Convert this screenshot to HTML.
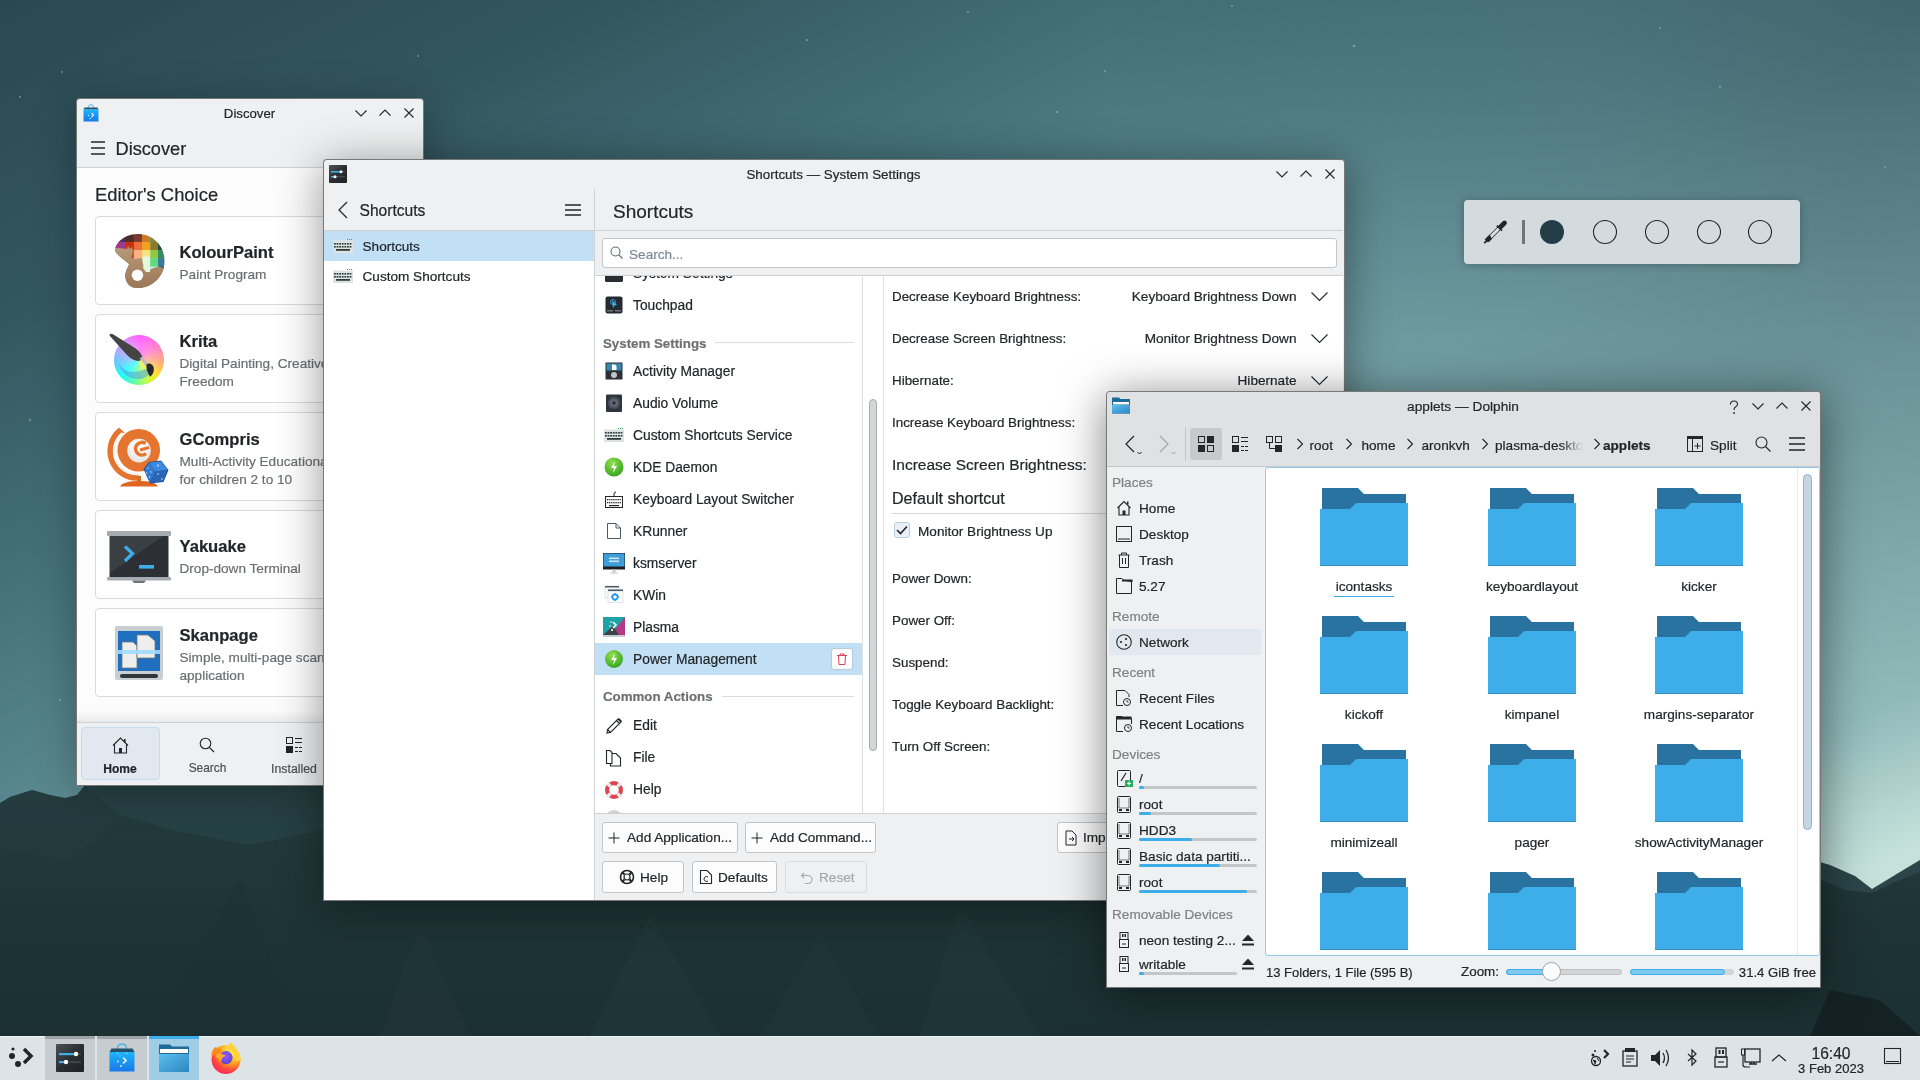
<!DOCTYPE html><html><head><meta charset="utf-8"><style>
html,body{margin:0;padding:0;}
body{width:1920px;height:1080px;overflow:hidden;position:relative;font-family:"Liberation Sans", sans-serif;}
.t{position:absolute;white-space:nowrap;-webkit-text-stroke:0.2px currentColor;}
svg{overflow:visible}
</style></head><body><div style="position:absolute;left:0;top:0;width:1920px;height:1080px;overflow:hidden;will-change:transform">
<div style="position:absolute;left:0;top:0;width:1920px;height:1080px;background:linear-gradient(153.3deg, #2a4852 0%, #33575f 15.6%, #47747d 30.5%, #5a8890 40%, #74a3a8 52.5%, #97c2c1 81%, #c4e0d9 88.3%, #d2e9e1 100%);"></div>
<div style="position:absolute;left:0;top:0;width:1920px;height:1080px;background:radial-gradient(520px 340px at 1400px 430px, rgba(200,240,240,0.09) 0%, rgba(200,240,240,0.05) 50%, rgba(200,240,240,0) 100%);"></div>
<div style="position:absolute;left:0;top:0;width:1920px;height:1080px;background:radial-gradient(circle 820px at 1920px 0px, rgba(5,25,35,0.40) 0%, rgba(5,25,35,0.2) 42%, rgba(5,25,35,0) 100%);"></div>
<svg style="position:absolute;left:0;top:0" width="1920" height="1080"><circle cx="807" cy="40" r="0.90" fill="#c8f0b0" opacity="0.55"/><circle cx="1057" cy="112" r="0.90" fill="#f0d0e0" opacity="0.55"/><circle cx="1354" cy="46" r="0.90" fill="#d0f0f0" opacity="0.55"/><circle cx="1720" cy="87" r="0.90" fill="#80f0f0" opacity="0.55"/><circle cx="418" cy="56" r="0.90" fill="#a0c8c8" opacity="0.55"/><circle cx="20" cy="97" r="0.90" fill="#a0d0d0" opacity="0.55"/><circle cx="1105" cy="71" r="0.90" fill="#a0d0d0" opacity="0.55"/><circle cx="968" cy="12" r="0.90" fill="#a0d0d0" opacity="0.55"/><circle cx="1232" cy="6" r="0.90" fill="#a0d0d0" opacity="0.55"/><circle cx="62" cy="72" r="0.90" fill="#a0c8c8" opacity="0.55"/><circle cx="1885" cy="167" r="0.90" fill="#a0d0d0" opacity="0.55"/><circle cx="1660" cy="28" r="0.90" fill="#a0d0d0" opacity="0.55"/><circle cx="30" cy="420" r="0.90" fill="#c0e0c0" opacity="0.55"/><circle cx="60" cy="700" r="0.90" fill="#c0e0a0" opacity="0.55"/></svg>
<svg style="position:absolute;left:0;top:0" width="1920" height="1080" viewBox="0 0 1920 1080">
<defs><linearGradient id="mg" x1="0" y1="0" x2="0" y2="1"><stop offset="0" stop-color="#243c3e"/><stop offset="0.5" stop-color="#1e3336"/><stop offset="1" stop-color="#1b2f32"/></linearGradient></defs>
<polygon fill="#2b4548" points="1820,862 1830,865 1855,876 1872,889 1900,872 1920,860 1920,900 1820,900"/>
<polygon fill="url(#mg)" points="0,803 10,797 32,790 50,795 65,798 77,795 85,785 323,780 1100,800 1800,870 1822,880 1845,890 1872,893 1895,882 1920,872 1920,1080 0,1080"/>
<polygon fill="#2d4b4e" opacity="0.45" points="85,786 323,781 323,830 250,845 180,832 120,815"/>
<polygon fill="#263f42" opacity="0.4" points="0,803 10,797 32,790 50,795 65,798 77,795 85,786 120,815 70,860 0,850"/>
<polygon fill="#24393c" opacity="0.35" points="380,1036 420,925 470,1036"/>
<polygon fill="#243b3e" opacity="0.35" points="590,1036 650,915 720,1036"/>
<polygon fill="#22383b" opacity="0.35" points="760,1036 820,935 880,1036"/>
<polygon fill="#253c3f" opacity="0.35" points="920,1036 960,905 1040,1036"/>
<polygon fill="#1e3235" opacity="0.35" points="150,1036 240,880 300,1036"/>
<polygon fill="#11191c" opacity="0.6" points="1830,990 1880,1000 1920,1036 1810,1036"/>
</svg>
<div style="position:absolute;left:76px;top:98px;width:346px;height:686px;border:1px solid rgba(0,0,0,0.5);border-radius:4px 4px 0 0;background:#eff0f1;box-shadow:0 6px 40px rgba(0,0,0,0.3)"></div>
<svg style="position:absolute;left:83px;top:104px;" width="16" height="18" viewBox="0 0 16 18"><defs><linearGradient id="bag" x1="0" y1="0" x2="0" y2="1"><stop offset="0" stop-color="#1cb4f7"/><stop offset="1" stop-color="#1a78ea"/></linearGradient></defs><path d="M5.3,6 V3.5 Q5.3,0.7 8,0.7 Q10.7,0.7 10.7,3.5 V6" fill="none" stroke="#3daee9" stroke-width="0.9"/><path d="M1.5,3.5 H14.5 L15.5,5.5 H0.5 Z" fill="#24506a"/><rect x="0.5" y="5.5" width="15" height="12" fill="url(#bag)"/><path d="M8.5,9 L10.5,11 L8.5,13" fill="none" stroke="#e8f6ff" stroke-width="1.1"/><circle cx="5.5" cy="11.5" r="0.7" fill="#cdefff"/><circle cx="7.2" cy="14.5" r="0.7" fill="#cdefff"/></svg>
<div class="t" style="left:249.5px;transform:translateX(-50%);top:107.43px;font-size:13.2px;line-height:13.2px;color:#232629;font-weight:400;">Discover</div>
<svg style="position:absolute;left:355px;top:109px;" width="12" height="8" viewBox="0 0 12 8"><polyline points="0.5,1.5 6,7 11.5,1.5" fill="none" stroke="#232629" stroke-width="1.1"/></svg>
<svg style="position:absolute;left:379px;top:109px;" width="12" height="8" viewBox="0 0 12 8"><polyline points="0.5,6.5 6,1 11.5,6.5" fill="none" stroke="#232629" stroke-width="1.1"/></svg>
<svg style="position:absolute;left:404px;top:108px;" width="10" height="10" viewBox="0 0 10 10"><path d="M0.5,0.5 L9.5,9.5 M9.5,0.5 L0.5,9.5" fill="none" stroke="#232629" stroke-width="1.1"/></svg>
<svg style="position:absolute;left:91px;top:141px;" width="14" height="14" viewBox="0 0 14 14"><path d="M0,1 H14 M0,7 H14 M0,13 H14" stroke="#232629" stroke-width="1.6"/></svg>
<div class="t" style="left:115.5px;top:140.29px;font-size:18.2px;line-height:18.2px;color:#232629;font-weight:400;">Discover</div>
<div style="position:absolute;left:77px;top:167px;width:346px;height:1px;background:#cfd1d3"></div>
<div style="position:absolute;left:77px;top:168px;width:346px;height:554px;background:#fcfcfc"></div>
<div class="t" style="left:95px;top:186.42px;font-size:18.4px;line-height:18.4px;color:#232629;font-weight:400;">Editor&#x27;s Choice</div>
<div style="position:absolute;left:95px;top:216px;width:240px;height:89px;background:#ffffff;border:1px solid #d9dadb;border-radius:4px;box-sizing:border-box"></div>
<div class="t" style="left:179.5px;top:245.35px;font-size:16.6px;line-height:16.6px;color:#232629;font-weight:700;">KolourPaint</div>
<div class="t" style="left:179.5px;top:267.79px;font-size:13.6px;line-height:13.6px;color:#6b6f73;font-weight:400;">Paint Program</div>
<div style="position:absolute;left:95px;top:314px;width:240px;height:89px;background:#ffffff;border:1px solid #d9dadb;border-radius:4px;box-sizing:border-box"></div>
<div class="t" style="left:179.5px;top:334.15px;font-size:16.6px;line-height:16.6px;color:#232629;font-weight:700;">Krita</div>
<div class="t" style="left:179.5px;top:356.69px;font-size:13.6px;line-height:13.6px;color:#6b6f73;font-weight:400;">Digital Painting, Creative</div>
<div class="t" style="left:179.5px;top:374.69px;font-size:13.6px;line-height:13.6px;color:#6b6f73;font-weight:400;">Freedom</div>
<div style="position:absolute;left:95px;top:412px;width:240px;height:89px;background:#ffffff;border:1px solid #d9dadb;border-radius:4px;box-sizing:border-box"></div>
<div class="t" style="left:179.5px;top:432.15px;font-size:16.6px;line-height:16.6px;color:#232629;font-weight:700;">GCompris</div>
<div class="t" style="left:179.5px;top:454.69px;font-size:13.6px;line-height:13.6px;color:#6b6f73;font-weight:400;">Multi-Activity Educational</div>
<div class="t" style="left:179.5px;top:472.69px;font-size:13.6px;line-height:13.6px;color:#6b6f73;font-weight:400;">for children 2 to 10</div>
<div style="position:absolute;left:95px;top:510px;width:240px;height:89px;background:#ffffff;border:1px solid #d9dadb;border-radius:4px;box-sizing:border-box"></div>
<div class="t" style="left:179.5px;top:539.35px;font-size:16.6px;line-height:16.6px;color:#232629;font-weight:700;">Yakuake</div>
<div class="t" style="left:179.5px;top:561.79px;font-size:13.6px;line-height:13.6px;color:#6b6f73;font-weight:400;">Drop-down Terminal</div>
<div style="position:absolute;left:95px;top:608px;width:240px;height:89px;background:#ffffff;border:1px solid #d9dadb;border-radius:4px;box-sizing:border-box"></div>
<div class="t" style="left:179.5px;top:628.15px;font-size:16.6px;line-height:16.6px;color:#232629;font-weight:700;">Skanpage</div>
<div class="t" style="left:179.5px;top:650.69px;font-size:13.6px;line-height:13.6px;color:#6b6f73;font-weight:400;">Simple, multi-page scan</div>
<div class="t" style="left:179.5px;top:668.69px;font-size:13.6px;line-height:13.6px;color:#6b6f73;font-weight:400;">application</div>
<svg style="position:absolute;left:105px;top:228px;" width="65" height="65" viewBox="0 0 65 65"><defs><clipPath id="kpc"><path d="M10,20 C14,10 24,6 33,6 C48,6 60,18 59.5,34 C59,50 46,60 33,60 C24,60 20,54 20.5,47 C20.5,42 24,38 24,36 C20,32 12,28 10,22 Z"/></clipPath><linearGradient id="kpb" x1="0" y1="0" x2="0" y2="1"><stop offset="0" stop-color="#b89a78"/><stop offset="1" stop-color="#9a7656"/></linearGradient></defs><g clip-path="url(#kpc)"><rect x="10" y="5" width="11.1" height="9.2" fill="#4a2f5a"/><rect x="20.8" y="5" width="8.4" height="9.2" fill="#4e2e2a"/><rect x="28.9" y="5" width="8.4" height="9.2" fill="#7d3a30"/><rect x="37" y="5" width="8.5" height="9.2" fill="#c87a2a"/><rect x="45.2" y="5" width="8.1" height="9.2" fill="#7c8c3a"/><rect x="53" y="5" width="7.3" height="9.2" fill="#2a4a3a"/><rect x="10" y="13.9" width="11.1" height="8.4" fill="#9b3a8a"/><rect x="20.8" y="13.9" width="8.4" height="8.4" fill="#c8300f"/><rect x="28.9" y="13.9" width="8.4" height="8.4" fill="#e8703a"/><rect x="37" y="13.9" width="8.5" height="8.4" fill="#f0a020"/><rect x="45.2" y="13.9" width="8.1" height="8.4" fill="#8c7a2a"/><rect x="53" y="13.9" width="7.3" height="8.4" fill="#1f5040"/><rect x="10" y="22" width="11.1" height="8.4" fill="#2a4050"/><rect x="20.8" y="22" width="8.4" height="8.4" fill="#c84a20"/><rect x="28.9" y="22" width="8.4" height="8.4" fill="#ffb080"/><rect x="37" y="22" width="8.5" height="8.4" fill="#f8e080"/><rect x="45.2" y="22" width="8.1" height="8.4" fill="#90c840"/><rect x="53" y="22" width="7.3" height="8.4" fill="#3a8a60"/><rect x="10" y="30.1" width="11.1" height="8.8" fill="#2a4050"/><rect x="20.8" y="30.1" width="8.4" height="8.8" fill="#a5805f"/><rect x="28.9" y="30.1" width="8.4" height="8.8" fill="#ffc8a0"/><rect x="37" y="30.1" width="8.5" height="8.8" fill="#e8f8e0"/><rect x="45.2" y="30.1" width="8.1" height="8.8" fill="#60d880"/><rect x="53" y="30.1" width="7.3" height="8.8" fill="#3a7a9a"/><rect x="10" y="38.6" width="11.1" height="8.7" fill="#2a4050"/><rect x="20.8" y="38.6" width="8.4" height="8.7" fill="#a5805f"/><rect x="28.9" y="38.6" width="8.4" height="8.7" fill="#a5805f"/><rect x="37" y="38.6" width="8.5" height="8.7" fill="#e8f8e0"/><rect x="45.2" y="38.6" width="8.1" height="8.7" fill="#c0f0e0"/><rect x="53" y="38.6" width="7.3" height="8.7" fill="#2a3a50"/><rect x="10" y="47" width="11.1" height="13.3" fill="#2a4050"/><rect x="20.8" y="47" width="8.4" height="13.3" fill="#a5805f"/><rect x="28.9" y="47" width="8.4" height="13.3" fill="#a5805f"/><rect x="37" y="47" width="8.5" height="13.3" fill="#a5805f"/><rect x="45.2" y="47" width="8.1" height="13.3" fill="#5aa0d8"/><rect x="53" y="47" width="7.3" height="13.3" fill="#5aa0d8"/><path d="M0,18 L13,20 L22,21 L23,18 L25,21 L27,19 L28,23 L26,31 L37,30 L38,36 L40,40 L43,44 L46,41 L53,38.6 L60,40 L60,62 L0,62 Z" fill="url(#kpb)"/><path d="M38,29 L42,27 L45,30 L45,44 L41,44 L38,40 L39,35 Z" fill="#e6f6dc"/></g><circle cx="32.5" cy="47.3" r="5.7" fill="#ffffff"/></svg>
<div style="position:absolute;left:114px;top:334.5px;width:50px;height:50px;border-radius:50%;background:conic-gradient(from 0deg, #ff00ff, #ff50c0 50deg, #ff9a70 90deg, #ffe020 130deg, #c0ff40 160deg, #60ffa0 190deg, #00ffff 230deg, #50b0ff 270deg, #b070ff 310deg, #ff00ff 360deg)"></div>
<svg style="position:absolute;left:105px;top:326px;" width="65" height="65" viewBox="0 0 65 65"><defs><radialGradient id="kin" cx="0.45" cy="0.3" r="0.7"><stop offset="0" stop-color="#ffffff" stop-opacity="0.55"/><stop offset="0.7" stop-color="#ffffff" stop-opacity="0.2"/><stop offset="1" stop-color="#ffffff" stop-opacity="0"/></radialGradient></defs><circle cx="34" cy="33.4" r="25" fill="url(#kin)"/><path d="M14,38 Q22,50 38,44 Q44,41 46,46 Q40,56 26,52 Q16,48 14,38 Z" fill="#4aa0e0" opacity="0.55"/><path d="M4.5,9.5 C4.5,7.5 6.5,7.2 8,8.2 L30,22 C34,25 37,28.5 37.5,31.5 L34.5,35 C30,35 26,33 22,29 Z" fill="#444444"/><path d="M34.5,32 L37.5,31 L43.5,37.2 L40.8,40.2 Z" fill="#bdbdbd"/><path d="M41.5,38.5 C44,36.5 48,38 48.8,42 C49.3,46 47.5,49 45,50.8 C43.5,47.5 41,44.5 41.5,38.5 Z" fill="#2a2a2a"/></svg>
<svg style="position:absolute;left:105px;top:424px;" width="65" height="70" viewBox="0 0 65 70"><defs><radialGradient id="gcw" cx="0.5" cy="0.3" r="0.7"><stop offset="0" stop-color="#ffffff"/><stop offset="1" stop-color="#e6e6e6"/></radialGradient></defs><path d="M14.6,6.5 A27,27 0 0 0 33.7,54" fill="none" stroke="#e5742f" stroke-width="5.5"/><path d="M11,8 L14,3.5 L20,9 Z" fill="#e5742f"/><path d="M16.5,11 A22,22 0 0 0 33.7,49.5" fill="none" stroke="#f4f4f4" stroke-width="1.8"/><circle cx="33.7" cy="26.2" r="21.3" fill="#e5742f"/><circle cx="34" cy="26.6" r="11.8" fill="url(#gcw)"/><path d="M40.5,19.5 A6.3,6.3 0 1 0 41,29.5" fill="none" stroke="#e5742f" stroke-width="3.6"/><path d="M35,26 L44,23.5" stroke="#e5742f" stroke-width="3"/><rect x="32" y="52" width="4" height="5" fill="#e06a20"/><path d="M15,62.5 Q18,57 34,57 Q50,57 53,62.5 Z" fill="#e0651e"/><path d="M38.5,45 L44,38 L56,36.5 L63.5,46 L58.5,58 L45,59.5 Z" fill="#1e4f9a"/><path d="M44.5,38.8 L56,37.3 L62.5,45.8 L50,47.5 Z" fill="#3d8be0"/><path d="M39.5,45.2 L44.5,38.8 L50,47.5 L45,58.5 Z" fill="#347cd0"/><path d="M50,47.5 L62.5,45.8 L58,57.5 L45.3,58.7 Z" fill="#2a64b4"/><g fill="#cfe3ff"><circle cx="53" cy="41.5" r="0.9"/><circle cx="43" cy="44" r="0.7"/><circle cx="41.5" cy="49" r="0.7"/><circle cx="46" cy="48" r="0.7"/><circle cx="44.5" cy="53" r="0.7"/><circle cx="53" cy="50" r="0.8"/><circle cx="57" cy="55" r="0.8"/></g></svg>
<svg style="position:absolute;left:107px;top:531px;" width="64" height="54" viewBox="0 0 64 54"><defs><linearGradient id="yk" x1="0" y1="0" x2="1" y2="1"><stop offset="0.45" stop-color="#3a3f44"/><stop offset="0.46" stop-color="#2c3034"/></linearGradient></defs><rect x="0" y="0" width="64" height="5" rx="1" fill="#a5abb0"/><rect x="2.5" y="5" width="59" height="41" fill="url(#yk)"/><rect x="0" y="46" width="64" height="3.5" rx="1" fill="#a5abb0"/><path d="M25,49.5 H39 L37,52 H27 Z" fill="#6e7479"/><path d="M18,15.5 L25.5,22.5 L18,30" fill="none" stroke="#3daee9" stroke-width="3.2"/><rect x="32" y="34" width="15" height="3.6" fill="#3daee9"/></svg>
<svg style="position:absolute;left:115px;top:626px;" width="48" height="54" viewBox="0 0 48 54"><rect x="0" y="0" width="48" height="54" rx="2" fill="#c9ced2"/><rect x="3" y="5" width="42" height="40" fill="#1f6fbf"/><path d="M7,16 H18 L22,20 V42 H7 Z" fill="#eeeeee" stroke="#777" stroke-width="0.8"/><path d="M22,9 H33 L40,15 V32 H22 Z" fill="#eeeeee" stroke="#777" stroke-width="0.8"/><rect x="3" y="24" width="42" height="4" fill="#9fdcff" opacity="0.9"/><rect x="5" y="48" width="38" height="4" rx="2" fill="#31363b"/></svg>
<div style="position:absolute;left:77px;top:710px;width:346px;height:12px;background:linear-gradient(to bottom, rgba(0,0,0,0), rgba(0,0,0,0.07))"></div>
<div style="position:absolute;left:77px;top:722px;width:346px;height:63px;background:#eff0f1;border-top:1px solid #cdd0d3;box-sizing:border-box"></div>
<div style="position:absolute;left:81px;top:727px;width:79px;height:53px;background:#e2e8ef;border:1px solid #c4dcef;border-radius:4px;box-sizing:border-box"></div>
<svg style="position:absolute;left:112px;top:737px;" width="17" height="17" viewBox="0 0 17 17"><path d="M1,8.5 L8.5,1 L16,8.5 M2.5,7 V16 H14.5 V7" fill="none" stroke="#232629" stroke-width="1.1"/><rect x="7" y="11" width="3" height="5" fill="#232629"/><rect x="12" y="2" width="1.6" height="3.5" fill="#232629"/></svg>
<div class="t" style="left:120px;transform:translateX(-50%);top:762.76px;font-size:12.1px;line-height:12.1px;color:#232629;font-weight:700;">Home</div>
<svg style="position:absolute;left:199px;top:737px;" width="16" height="16" viewBox="0 0 16 16"><circle cx="6.5" cy="6.5" r="5.3" fill="none" stroke="#232629" stroke-width="1.1"/><path d="M10.3,10.3 L15,15" stroke="#232629" stroke-width="1.2"/></svg>
<div class="t" style="left:207.5px;transform:translateX(-50%);top:762.93px;font-size:11.9px;line-height:11.9px;color:#4d5154;font-weight:400;">Search</div>
<svg style="position:absolute;left:286px;top:737px;" width="16" height="16" viewBox="0 0 16 16"><rect x="0.5" y="0.5" width="6" height="6" fill="none" stroke="#232629"/><rect x="0" y="9" width="7" height="7" fill="#232629"/><path d="M9,1.5 H16 M9,5.5 H16 M9,10.5 H12 M9,14.5 H12 M13,10.5 H16 M13,14.5 H16" stroke="#232629" stroke-width="1"/></svg>
<div class="t" style="left:294px;transform:translateX(-50%);top:762.59px;font-size:12.3px;line-height:12.3px;color:#4d5154;font-weight:400;">Installed</div>
<div style="position:absolute;left:323px;top:159px;width:1020px;height:740px;border:1px solid rgba(0,0,0,0.5);border-radius:4px 4px 0 0;background:#eff0f1;box-shadow:0 6px 46px rgba(0,0,0,0.42)"></div>
<svg style="position:absolute;left:329px;top:165px;" width="18" height="18" viewBox="0 0 18 18"><defs><linearGradient id="ssg" x1="0" y1="0" x2="1" y2="1"><stop offset="0" stop-color="#4d5257"/><stop offset="0.5" stop-color="#2a2e32"/><stop offset="1" stop-color="#1f2326"/></linearGradient></defs><rect x="0" y="0" width="18" height="18" rx="1" fill="url(#ssg)"/><rect x="2" y="6" width="10" height="1.6" fill="#3daee9"/><rect x="12" y="6.2" width="4" height="1" fill="#555"/><circle cx="12" cy="6.8" r="1.5" fill="#fff"/><rect x="2" y="11" width="4" height="1.6" fill="#3daee9"/><rect x="7" y="11.2" width="9" height="1" fill="#555"/><circle cx="6" cy="11.8" r="1.5" fill="#fff"/></svg>
<div class="t" style="left:833.5px;transform:translateX(-50%);top:167.86px;font-size:13.4px;line-height:13.4px;color:#232629;font-weight:400;">Shortcuts — System Settings</div>
<svg style="position:absolute;left:1275.5px;top:170px;" width="12" height="8" viewBox="0 0 12 8"><polyline points="0.5,1.5 6,7 11.5,1.5" fill="none" stroke="#232629" stroke-width="1.1"/></svg>
<svg style="position:absolute;left:1299.5px;top:170px;" width="12" height="8" viewBox="0 0 12 8"><polyline points="0.5,6.5 6,1 11.5,6.5" fill="none" stroke="#232629" stroke-width="1.1"/></svg>
<svg style="position:absolute;left:1325px;top:169px;" width="10" height="10" viewBox="0 0 10 10"><path d="M0.5,0.5 L9.5,9.5 M9.5,0.5 L0.5,9.5" fill="none" stroke="#232629" stroke-width="1.1"/></svg>
<div style="position:absolute;left:594px;top:189px;width:1px;height:711px;background:#cfd1d3"></div>
<svg style="position:absolute;left:337px;top:201px;" width="12" height="18" viewBox="0 0 12 18"><polyline points="10,1 2,9 10,17" fill="none" stroke="#232629" stroke-width="1.2"/></svg>
<div class="t" style="left:359.5px;top:203.39px;font-size:15.6px;line-height:15.6px;color:#232629;font-weight:400;">Shortcuts</div>
<svg style="position:absolute;left:565px;top:204px;" width="16" height="12" viewBox="0 0 16 12"><path d="M0,1 H16 M0,6 H16 M0,11 H16" stroke="#232629" stroke-width="1.7"/></svg>
<div style="position:absolute;left:324px;top:230px;width:1019px;height:1px;background:#cfd1d3"></div>
<div style="position:absolute;left:324px;top:231px;width:270px;height:669px;background:#ffffff"></div>
<div style="position:absolute;left:324px;top:231px;width:270px;height:30px;background:#c2e0f5"></div>
<svg style="position:absolute;left:333px;top:239px;" width="20" height="14" viewBox="0 0 20 14"><rect x="0" y="1.5" width="20" height="12.5" fill="#dfe2e4"/><g fill="#2c3e3a"><rect x="1.0" y="4" width="1.8" height="1.6"/><rect x="3.6" y="4" width="1.8" height="1.6"/><rect x="6.2" y="4" width="1.8" height="1.6"/><rect x="8.8" y="4" width="1.8" height="1.6"/><rect x="11.4" y="4" width="1.8" height="1.6"/><rect x="14.0" y="4" width="1.8" height="1.6"/><rect x="16.6" y="4" width="1.8" height="1.6"/><rect x="1.0" y="7" width="1.8" height="1.6"/><rect x="3.6" y="7" width="1.8" height="1.6"/><rect x="6.2" y="7" width="1.8" height="1.6"/><rect x="8.8" y="7" width="1.8" height="1.6"/><rect x="11.4" y="7" width="1.8" height="1.6"/><rect x="14.0" y="7" width="1.8" height="1.6"/><rect x="16.6" y="7" width="1.8" height="1.6"/><rect x="3" y="10" width="14" height="1.8"/></g><g fill="#27ae60"><rect x="14" y="0" width="1" height="1"/><rect x="16" y="0" width="1" height="1"/><rect x="18" y="0" width="1" height="1"/></g></svg>
<div class="t" style="left:362.5px;top:239.89px;font-size:13.6px;line-height:13.6px;color:#232629;font-weight:400;">Shortcuts</div>
<svg style="position:absolute;left:333px;top:269px;" width="20" height="14" viewBox="0 0 20 14"><rect x="0" y="1.5" width="20" height="12.5" fill="#dfe2e4"/><g fill="#2c3e3a"><rect x="1.0" y="4" width="1.8" height="1.6"/><rect x="3.6" y="4" width="1.8" height="1.6"/><rect x="6.2" y="4" width="1.8" height="1.6"/><rect x="8.8" y="4" width="1.8" height="1.6"/><rect x="11.4" y="4" width="1.8" height="1.6"/><rect x="14.0" y="4" width="1.8" height="1.6"/><rect x="16.6" y="4" width="1.8" height="1.6"/><rect x="1.0" y="7" width="1.8" height="1.6"/><rect x="3.6" y="7" width="1.8" height="1.6"/><rect x="6.2" y="7" width="1.8" height="1.6"/><rect x="8.8" y="7" width="1.8" height="1.6"/><rect x="11.4" y="7" width="1.8" height="1.6"/><rect x="14.0" y="7" width="1.8" height="1.6"/><rect x="16.6" y="7" width="1.8" height="1.6"/><rect x="3" y="10" width="14" height="1.8"/></g><g fill="#27ae60"><rect x="14" y="0" width="1" height="1"/><rect x="16" y="0" width="1" height="1"/><rect x="18" y="0" width="1" height="1"/></g></svg>
<div class="t" style="left:362.5px;top:269.89px;font-size:13.6px;line-height:13.6px;color:#232629;font-weight:400;">Custom Shortcuts</div>
<div class="t" style="left:613px;top:201.72px;font-size:19px;line-height:19px;color:#232629;font-weight:400;">Shortcuts</div>
<div style="position:absolute;left:602px;top:238px;width:735px;height:30px;background:#ffffff;border:1px solid #c4c6c8;border-radius:3px;box-sizing:border-box"></div>
<svg style="position:absolute;left:610px;top:246px;" width="14" height="14" viewBox="0 0 14 14"><circle cx="5.5" cy="5.5" r="4.5" fill="none" stroke="#5f6a74" stroke-width="1.1"/><path d="M8.8,8.8 L12.5,12.5" stroke="#5f6a74" stroke-width="1.2"/></svg>
<div class="t" style="left:629px;top:247.79px;font-size:13.6px;line-height:13.6px;color:#7d8a96;font-weight:400;">Search...</div>
<div style="position:absolute;left:595px;top:275px;width:748px;height:1px;background:#cfd1d3"></div>
<div style="position:absolute;left:595px;top:276px;width:748px;height:537px;background:#ffffff"></div>
<div style="position:absolute;left:862px;top:276px;width:1px;height:537px;background:#dfe0e1"></div>
<div style="position:absolute;left:883px;top:276px;width:1px;height:537px;background:#dfe0e1"></div>
<div style="position:absolute;left:869px;top:399px;width:8px;height:352px;background:#d5d6d7;border:1px solid #a9abad;border-radius:4px;box-sizing:border-box"></div>
<div style="position:absolute;left:595px;top:643px;width:267px;height:32px;background:#c2e0f5"></div>
<div style="position:absolute;left:595px;top:276px;width:267px;height:537px;overflow:hidden">
<div class="t" style="left:38px;top:-8.68px;font-size:13.8px;line-height:13.8px;color:#232629;font-weight:400;">System Settings</div>
<svg style="position:absolute;left:10px;top:-12px;" width="18" height="18" viewBox="0 0 18 18"><rect x="0" y="0" width="18" height="18" rx="1.5" fill="#2a2e32"/></svg>
</div>
<svg style="position:absolute;left:605px;top:296px;" width="18" height="18" viewBox="0 0 18 18"><rect x="0.5" y="0.5" width="17" height="17" rx="2" fill="#232a31"/><rect x="2" y="14" width="6" height="1.5" fill="#6d747a"/><rect x="10" y="14" width="6" height="1.5" fill="#6d747a"/><path d="M7,4 L12,9 L9.5,9.5 L8,12 Z" fill="#3daee9"/><circle cx="8" cy="6" r="2.5" fill="none" stroke="#3daee9" stroke-width="0.8"/></svg>
<div class="t" style="left:633px;top:299.32px;font-size:13.8px;line-height:13.8px;color:#232629;font-weight:400;">Touchpad</div>
<div class="t" style="left:603px;top:336.74px;font-size:13.3px;line-height:13.3px;color:#6e7174;font-weight:700;">System Settings</div>
<div style="position:absolute;left:715px;top:342px;width:139px;height:1px;background:#dcdddf"></div>
<div class="t" style="left:633px;top:365.32px;font-size:13.8px;line-height:13.8px;color:#232629;font-weight:400;">Activity Manager</div>
<div class="t" style="left:633px;top:397.32px;font-size:13.8px;line-height:13.8px;color:#232629;font-weight:400;">Audio Volume</div>
<div class="t" style="left:633px;top:429.32px;font-size:13.8px;line-height:13.8px;color:#232629;font-weight:400;">Custom Shortcuts Service</div>
<div class="t" style="left:633px;top:461.32px;font-size:13.8px;line-height:13.8px;color:#232629;font-weight:400;">KDE Daemon</div>
<div class="t" style="left:633px;top:493.32px;font-size:13.8px;line-height:13.8px;color:#232629;font-weight:400;">Keyboard Layout Switcher</div>
<div class="t" style="left:633px;top:525.32px;font-size:13.8px;line-height:13.8px;color:#232629;font-weight:400;">KRunner</div>
<div class="t" style="left:633px;top:557.32px;font-size:13.8px;line-height:13.8px;color:#232629;font-weight:400;">ksmserver</div>
<div class="t" style="left:633px;top:589.32px;font-size:13.8px;line-height:13.8px;color:#232629;font-weight:400;">KWin</div>
<div class="t" style="left:633px;top:621.32px;font-size:13.8px;line-height:13.8px;color:#232629;font-weight:400;">Plasma</div>
<div class="t" style="left:633px;top:653.32px;font-size:13.8px;line-height:13.8px;color:#232629;font-weight:400;">Power Management</div>
<svg style="position:absolute;left:605px;top:362px;" width="18" height="18" viewBox="0 0 18 18"><rect x="0.5" y="0.5" width="17" height="17" fill="#2d3035"/><rect x="1.5" y="1.5" width="15" height="7" fill="#3a86b0"/><path d="M7,2.5 H10 L11.5,4 V8 H7 Z" fill="#fff"/><circle cx="9" cy="13" r="3" fill="#bfc5ca"/></svg>
<svg style="position:absolute;left:605px;top:394px;" width="18" height="18" viewBox="0 0 18 18"><rect x="1" y="0.5" width="16" height="17.5" rx="1" fill="#2f3540"/><circle cx="9" cy="9" r="6" fill="#4a525c"/><circle cx="9" cy="9" r="4" fill="#5c6570"/><circle cx="9" cy="9" r="1.5" fill="#222"/></svg>
<svg style="position:absolute;left:604px;top:428px;" width="20" height="14" viewBox="0 0 20 14"><rect x="0" y="1.5" width="20" height="12.5" fill="#dfe2e4"/><g fill="#2c3e3a"><rect x="1.0" y="4" width="1.8" height="1.6"/><rect x="3.6" y="4" width="1.8" height="1.6"/><rect x="6.2" y="4" width="1.8" height="1.6"/><rect x="8.8" y="4" width="1.8" height="1.6"/><rect x="11.4" y="4" width="1.8" height="1.6"/><rect x="14.0" y="4" width="1.8" height="1.6"/><rect x="16.6" y="4" width="1.8" height="1.6"/><rect x="1.0" y="7" width="1.8" height="1.6"/><rect x="3.6" y="7" width="1.8" height="1.6"/><rect x="6.2" y="7" width="1.8" height="1.6"/><rect x="8.8" y="7" width="1.8" height="1.6"/><rect x="11.4" y="7" width="1.8" height="1.6"/><rect x="14.0" y="7" width="1.8" height="1.6"/><rect x="16.6" y="7" width="1.8" height="1.6"/><rect x="3" y="10" width="14" height="1.8"/></g><g fill="#27ae60"><rect x="14" y="0" width="1" height="1"/><rect x="16" y="0" width="1" height="1"/><rect x="18" y="0" width="1" height="1"/></g></svg>
<svg style="position:absolute;left:604px;top:457px;" width="20" height="20" viewBox="0 0 20 20"><defs><radialGradient id="gr" cx="0.4" cy="0.3" r="0.8"><stop offset="0" stop-color="#8ee04a"/><stop offset="1" stop-color="#2f9e1e"/></radialGradient></defs><circle cx="10" cy="10" r="9.5" fill="url(#gr)"/><path d="M11,4 L7,11 H10 L9,16 L13,9 H10 Z" fill="#fff"/></svg>
<svg style="position:absolute;left:605px;top:490px;" width="18" height="18" viewBox="0 0 18 18"><rect x="0.5" y="6.5" width="17" height="11" fill="none" stroke="#232629" stroke-width="1"/><path d="M9,6.5 V4 Q9,2 11,2" fill="none" stroke="#232629"/><rect x="2.0" y="9" width="1.3" height="1.3" fill="#232629"/><rect x="2.0" y="12" width="1.3" height="1.3" fill="#232629"/><rect x="4.1" y="9" width="1.3" height="1.3" fill="#232629"/><rect x="4.1" y="12" width="1.3" height="1.3" fill="#232629"/><rect x="6.2" y="9" width="1.3" height="1.3" fill="#232629"/><rect x="6.2" y="12" width="1.3" height="1.3" fill="#232629"/><rect x="8.3" y="9" width="1.3" height="1.3" fill="#232629"/><rect x="8.3" y="12" width="1.3" height="1.3" fill="#232629"/><rect x="10.4" y="9" width="1.3" height="1.3" fill="#232629"/><rect x="10.4" y="12" width="1.3" height="1.3" fill="#232629"/><rect x="12.5" y="9" width="1.3" height="1.3" fill="#232629"/><rect x="12.5" y="12" width="1.3" height="1.3" fill="#232629"/><rect x="14.6" y="9" width="1.3" height="1.3" fill="#232629"/><rect x="14.6" y="12" width="1.3" height="1.3" fill="#232629"/><rect x="4" y="15" width="10" height="1.2" fill="#232629"/></svg>
<svg style="position:absolute;left:606px;top:522px;" width="16" height="18" viewBox="0 0 16 18"><path d="M1.5,1.5 H10 L14.5,6 V16.5 H1.5 Z" fill="#fff" stroke="#4a5a6a" stroke-width="1"/><path d="M10,1.5 V6 H14.5" fill="none" stroke="#4a5a6a"/></svg>
<svg style="position:absolute;left:603px;top:553px;" width="22" height="21" viewBox="0 0 22 21"><rect x="0" y="0" width="22" height="16.5" fill="#1d1f22"/><rect x="0.5" y="0.5" width="21" height="13" fill="#3d9ed8"/><rect x="6" y="4.5" width="10" height="1.6" fill="#cfe3f0"/><rect x="6" y="7.5" width="10" height="1.6" fill="#cfe3f0"/><rect x="9.5" y="16.5" width="3" height="3" fill="#c5c9cc"/><rect x="7" y="19.5" width="8" height="1" fill="#c5c9cc"/></svg>
<svg style="position:absolute;left:604px;top:585px;" width="20" height="18" viewBox="0 0 20 18"><rect x="1" y="1" width="14" height="12" fill="#fafbfc" stroke="#d0d5da" stroke-width="0.6"/><rect x="1" y="1" width="14" height="1.5" fill="#4d5b68"/><rect x="4" y="4.5" width="15" height="13" fill="#fafbfc" stroke="#d0d5da" stroke-width="0.6"/><rect x="4" y="4.5" width="15" height="1.6" fill="#4d5b68"/><circle cx="11" cy="12" r="2.6" fill="none" stroke="#1d99f3" stroke-width="1.6"/><path d="M11,8 V9.5 M11,14.5 V16 M7,12 H8.5 M13.5,12 H15" stroke="#1d99f3" stroke-width="1.4"/></svg>
<svg style="position:absolute;left:603px;top:617px;" width="22" height="20" viewBox="0 0 22 20"><rect x="0" y="0" width="22" height="18" fill="#1ea2a5"/><path d="M22,0 V18 H8 Z" fill="#b23a84"/><path d="M0,18 L10,9 L16,18 Z" fill="#3c4248"/><rect x="0" y="18" width="22" height="2" fill="#c8ccd0"/><path d="M10,5 L13,8 L10,11" fill="none" stroke="#fff" stroke-width="1.6"/><circle cx="8" cy="5" r="0.8" fill="#fff"/><circle cx="7" cy="9" r="0.8" fill="#fff"/><circle cx="9" cy="13" r="1.1" fill="#fff"/></svg>
<svg style="position:absolute;left:605px;top:650px;" width="18" height="18" viewBox="0 0 18 18"><defs><radialGradient id="gr2" cx="0.4" cy="0.3" r="0.8"><stop offset="0" stop-color="#8ee04a"/><stop offset="1" stop-color="#2f9e1e"/></radialGradient></defs><circle cx="9" cy="9" r="9" fill="url(#gr2)"/><path d="M10,3 L6,10 H9 L8,15 L12,8 H9 Z" fill="#fff"/></svg>
<div style="position:absolute;left:831px;top:648px;width:22px;height:22px;background:#fcfcfc;border:1px solid #b9c9d6;border-radius:3px;box-sizing:border-box"></div>
<svg style="position:absolute;left:836px;top:653px;" width="12" height="12" viewBox="0 0 12 12"><path d="M1,2.5 H11 M4,2.5 V1 H8 V2.5 M2.5,2.5 L3,11.5 H9 L9.5,2.5" fill="none" stroke="#da4453" stroke-width="1"/></svg>
<div class="t" style="left:603px;top:689.74px;font-size:13.3px;line-height:13.3px;color:#6e7174;font-weight:700;">Common Actions</div>
<div style="position:absolute;left:722px;top:696px;width:132px;height:1px;background:#dcdddf"></div>
<svg style="position:absolute;left:605px;top:717px;" width="18" height="18" viewBox="0 0 18 18"><path d="M2,16 L2.5,12.5 L13,2 L16,5 L5.5,15.5 Z M11.5,3.5 L14.5,6.5 M2.5,12.5 L5.5,15.5" fill="none" stroke="#232629" stroke-width="1.1"/><path d="M13,2 L16,5 L17,4 L14,1 Z" fill="#232629"/></svg>
<div class="t" style="left:633px;top:719.32px;font-size:13.8px;line-height:13.8px;color:#232629;font-weight:400;">Edit</div>
<svg style="position:absolute;left:605px;top:749px;" width="18" height="18" viewBox="0 0 18 18"><path d="M1.5,1.5 H5 L7,3.5 V14.5 H1.5 Z M7,4.5 H11 L15.5,9 V17 H5.5 V14.5" fill="none" stroke="#232629" stroke-width="1.1"/></svg>
<div class="t" style="left:633px;top:751.32px;font-size:13.8px;line-height:13.8px;color:#232629;font-weight:400;">File</div>
<svg style="position:absolute;left:604px;top:780px;" width="20" height="20" viewBox="0 0 20 20"><circle cx="10" cy="10" r="9" fill="#da4453"/><circle cx="10" cy="10" r="4.8" fill="#fff"/><path d="M3.6,3.6 L6.6,6.6 M16.4,3.6 L13.4,6.6 M3.6,16.4 L6.6,13.4 M16.4,16.4 L13.4,13.4" stroke="#e8e8e8" stroke-width="3.5"/></svg>
<div class="t" style="left:633px;top:783.32px;font-size:13.8px;line-height:13.8px;color:#232629;font-weight:400;">Help</div>
<div style="position:absolute;left:595px;top:805px;width:267px;height:8px;overflow:hidden"><div style="position:absolute;left:10px;top:5px;width:18px;height:18px;border-radius:9px;background:#cfd3d6"></div></div>
<div class="t" style="left:892px;top:289.66px;font-size:13.4px;line-height:13.4px;color:#232629;font-weight:400;">Decrease Keyboard Brightness:</div>
<div class="t" style="right:623.5px;top:290.49px;font-size:13.6px;line-height:13.6px;color:#232629;font-weight:400;">Keyboard Brightness Down</div>
<svg style="position:absolute;left:1311px;top:292px;top:292px" width="17" height="9" viewBox="0 0 17 9"><polyline points="0.5,0.5 8.5,8.5 16.5,0.5" fill="none" stroke="#232629" stroke-width="1.1"/></svg>
<div class="t" style="left:892px;top:331.66px;font-size:13.4px;line-height:13.4px;color:#232629;font-weight:400;">Decrease Screen Brightness:</div>
<div class="t" style="right:623.5px;top:332.49px;font-size:13.6px;line-height:13.6px;color:#232629;font-weight:400;">Monitor Brightness Down</div>
<svg style="position:absolute;left:1311px;top:292px;top:334px" width="17" height="9" viewBox="0 0 17 9"><polyline points="0.5,0.5 8.5,8.5 16.5,0.5" fill="none" stroke="#232629" stroke-width="1.1"/></svg>
<div class="t" style="left:892px;top:373.66px;font-size:13.4px;line-height:13.4px;color:#232629;font-weight:400;">Hibernate:</div>
<div class="t" style="right:623.5px;top:374.49px;font-size:13.6px;line-height:13.6px;color:#232629;font-weight:400;">Hibernate</div>
<svg style="position:absolute;left:1311px;top:292px;top:376px" width="17" height="9" viewBox="0 0 17 9"><polyline points="0.5,0.5 8.5,8.5 16.5,0.5" fill="none" stroke="#232629" stroke-width="1.1"/></svg>
<div class="t" style="left:892px;top:415.66px;font-size:13.4px;line-height:13.4px;color:#232629;font-weight:400;">Increase Keyboard Brightness:</div>
<div class="t" style="left:892px;top:457.28px;font-size:15.5px;line-height:15.5px;color:#232629;font-weight:400;">Increase Screen Brightness:</div>
<div class="t" style="left:892px;top:489.77px;font-size:16.1px;line-height:16.1px;color:#232629;font-weight:400;">Default shortcut</div>
<div style="position:absolute;left:892px;top:513px;width:300px;height:1px;background:#d6d7d8"></div>
<div style="position:absolute;left:894px;top:522px;width:16px;height:16px;background:#e9f1f8;border:1px solid #b8cde0;border-radius:3px;box-sizing:border-box"></div>
<svg style="position:absolute;left:896px;top:525px;" width="12" height="10" viewBox="0 0 12 10"><polyline points="1,5 4.5,8.5 11,1.5" fill="none" stroke="#232629" stroke-width="1.6"/></svg>
<div class="t" style="left:918px;top:524.99px;font-size:13.6px;line-height:13.6px;color:#232629;font-weight:400;">Monitor Brightness Up</div>
<div class="t" style="left:892px;top:571.96px;font-size:13.4px;line-height:13.4px;color:#232629;font-weight:400;">Power Down:</div>
<div class="t" style="left:892px;top:613.96px;font-size:13.4px;line-height:13.4px;color:#232629;font-weight:400;">Power Off:</div>
<div class="t" style="left:892px;top:655.96px;font-size:13.4px;line-height:13.4px;color:#232629;font-weight:400;">Suspend:</div>
<div class="t" style="left:892px;top:697.96px;font-size:13.4px;line-height:13.4px;color:#232629;font-weight:400;">Toggle Keyboard Backlight:</div>
<div class="t" style="left:892px;top:739.96px;font-size:13.4px;line-height:13.4px;color:#232629;font-weight:400;">Turn Off Screen:</div>
<div style="position:absolute;left:595px;top:813px;width:748px;height:1px;background:#cfd1d3"></div>
<div style="position:absolute;left:602px;top:822px;width:136px;height:31px;background:#fcfcfc;border:1px solid #c2c4c6;border-radius:3px;box-sizing:border-box"></div>
<svg style="position:absolute;left:608px;top:832px" width="12" height="12"><path d="M6,0.5 V11.5 M0.5,6 H11.5" stroke="#232629" stroke-width="1"/></svg>
<div class="t" style="left:627px;top:831.19px;font-size:13.6px;line-height:13.6px;color:#232629;font-weight:400;">Add Application...</div>
<div style="position:absolute;left:745px;top:822px;width:131px;height:31px;background:#fcfcfc;border:1px solid #c2c4c6;border-radius:3px;box-sizing:border-box"></div>
<svg style="position:absolute;left:751px;top:832px" width="12" height="12"><path d="M6,0.5 V11.5 M0.5,6 H11.5" stroke="#232629" stroke-width="1"/></svg>
<div class="t" style="left:770px;top:831.19px;font-size:13.6px;line-height:13.6px;color:#232629;font-weight:400;">Add Command...</div>
<div style="position:absolute;left:1057px;top:822px;width:120px;height:31px;background:#fcfcfc;border:1px solid #c2c4c6;border-radius:3px;box-sizing:border-box"></div>
<svg style="position:absolute;left:1064px;top:830px" width="14" height="16"><path d="M2,1 H8 L12,5 V15 H2 Z" fill="none" stroke="#232629"/><path d="M5,9 H10 M8,7 L10,9 L8,11" fill="none" stroke="#232629"/></svg>
<div class="t" style="left:1083px;top:831.19px;font-size:13.6px;line-height:13.6px;color:#232629;font-weight:400;">Import...</div>
<div style="position:absolute;left:602px;top:861px;width:82px;height:32px;background:#fcfcfc;border:1px solid #c2c4c6;border-radius:3px;box-sizing:border-box"></div>
<svg style="position:absolute;left:619px;top:869px" width="16" height="16"><circle cx="8" cy="8" r="6.5" fill="none" stroke="#232629" stroke-width="1.6"/><circle cx="8" cy="8" r="3" fill="none" stroke="#232629" stroke-width="1.2"/><path d="M3,3 L5.5,5.5 M13,3 L10.5,5.5 M3,13 L5.5,10.5 M13,13 L10.5,10.5" stroke="#232629" stroke-width="2.2"/></svg>
<div class="t" style="left:640px;top:870.69px;font-size:13.6px;line-height:13.6px;color:#232629;font-weight:400;">Help</div>
<div style="position:absolute;left:692px;top:861px;width:85px;height:32px;background:#fcfcfc;border:1px solid #c2c4c6;border-radius:3px;box-sizing:border-box"></div>
<svg style="position:absolute;left:699px;top:869px" width="14" height="16"><path d="M1.5,1.5 H8 L12.5,6 V14.5 H1.5 Z" fill="none" stroke="#232629" stroke-width="1.1"/><path d="M9,8 A2.5,2.5 0 1 0 9,12" fill="none" stroke="#232629"/></svg>
<div class="t" style="left:718px;top:870.69px;font-size:13.6px;line-height:13.6px;color:#232629;font-weight:400;">Defaults</div>
<div style="position:absolute;left:785px;top:861px;width:82px;height:32px;background:#eff0f1;border:1px solid #dadbdc;border-radius:3px;box-sizing:border-box"></div>
<svg style="position:absolute;left:800px;top:869px" width="14" height="16"><path d="M4,4 L1.5,6.5 L4,9 M1.5,6.5 H8 A4,4 0 0 1 8,14.5 H5" fill="none" stroke="#a5a8aa" stroke-width="1.1"/></svg>
<div class="t" style="left:819px;top:870.69px;font-size:13.6px;line-height:13.6px;color:#a5a8aa;font-weight:400;">Reset</div>
<div style="position:absolute;left:1106px;top:391px;width:713px;height:595px;border:1px solid rgba(0,0,0,0.5);border-radius:4px 4px 0 0;background:#eff0f1;box-shadow:0 6px 46px rgba(0,0,0,0.5)"></div>
<div style="position:absolute;left:1107px;top:392px;width:713px;height:74px;background:#dfe1e3;border-radius:3px 3px 0 0"></div>
<div style="position:absolute;left:1107px;top:466px;width:713px;height:1px;background:#c5c7c9"></div>
<svg style="position:absolute;left:1112px;top:397px;" width="19" height="17" viewBox="0 0 19 17"><defs><linearGradient id="df" x1="0" y1="0" x2="1" y2="1"><stop offset="0" stop-color="#5cc0f0"/><stop offset="1" stop-color="#2a86c0"/></linearGradient></defs><path d="M0,0.5 H7 L8.5,2 H18 V16.5 H0 Z" fill="#1e6a98"/><rect x="1" y="5" width="16" height="2.5" fill="#fafafa"/><path d="M0,8 H18 V16.5 H0 Z" fill="url(#df)"/></svg>
<div class="t" style="left:1463px;transform:translateX(-50%);top:399.90px;font-size:13.7px;line-height:13.7px;color:#232629;font-weight:400;">applets — Dolphin</div>
<svg style="position:absolute;left:1729px;top:400px;" width="10" height="14" viewBox="0 0 10 14"><path d="M1.5,4.5 Q1.5,1 5,1 Q8.5,1 8.5,4 Q8.5,6 6.5,7 Q5,7.8 5,10" fill="none" stroke="#232629" stroke-width="1.1"/><circle cx="5" cy="13" r="0.9" fill="#232629"/></svg>
<svg style="position:absolute;left:1751.5px;top:402px;" width="12" height="8" viewBox="0 0 12 8"><polyline points="0.5,1.5 6,7 11.5,1.5" fill="none" stroke="#232629" stroke-width="1.1"/></svg>
<svg style="position:absolute;left:1775.5px;top:402px;" width="12" height="8" viewBox="0 0 12 8"><polyline points="0.5,6.5 6,1 11.5,6.5" fill="none" stroke="#232629" stroke-width="1.1"/></svg>
<svg style="position:absolute;left:1801px;top:401px;" width="10" height="10" viewBox="0 0 10 10"><path d="M0.5,0.5 L9.5,9.5 M9.5,0.5 L0.5,9.5" fill="none" stroke="#232629" stroke-width="1.1"/></svg>
<svg style="position:absolute;left:1124px;top:435px;" width="20" height="20" viewBox="0 0 20 20"><polyline points="10,1 2,9 10,17" fill="none" stroke="#232629" stroke-width="1.2"/><polyline points="13.5,17 15.5,19 17.5,17" fill="none" stroke="#232629" stroke-width="1"/></svg>
<svg style="position:absolute;left:1158px;top:435px;" width="20" height="20" viewBox="0 0 20 20"><polyline points="2,1 10,9 2,17" fill="none" stroke="#a4a7aa" stroke-width="1.2"/><polyline points="13.5,17 15.5,19 17.5,17" fill="none" stroke="#a4a7aa" stroke-width="1"/></svg>
<div style="position:absolute;left:1185px;top:427px;width:1px;height:34px;background:#c5c7c9"></div>
<div style="position:absolute;left:1190px;top:428px;width:32px;height:32px;background:#c7cacd;border-radius:3px"></div>
<svg style="position:absolute;left:1198px;top:436px;" width="16" height="16" viewBox="0 0 16 16"><rect x="0.5" y="0.5" width="6" height="6" fill="none" stroke="#232629"/><rect x="9" y="0" width="7" height="7" fill="#232629"/><rect x="0" y="9" width="7" height="7" fill="#232629"/><rect x="9.5" y="9.5" width="6" height="6" fill="none" stroke="#232629"/></svg>
<svg style="position:absolute;left:1232px;top:436px;" width="16" height="16" viewBox="0 0 16 16"><rect x="0.5" y="0.5" width="6" height="6" fill="none" stroke="#232629"/><rect x="0" y="9" width="7" height="7" fill="#232629"/><path d="M9,1.5 H16 M9,5.5 H16 M9,10.5 H12 M9,14.5 H12 M13,10.5 H16 M13,14.5 H16" stroke="#232629" stroke-width="1"/></svg>
<svg style="position:absolute;left:1266px;top:436px;" width="16" height="16" viewBox="0 0 16 16"><rect x="0.5" y="0.5" width="6" height="6" fill="none" stroke="#232629"/><rect x="9.5" y="0.5" width="6" height="6" fill="none" stroke="#232629"/><rect x="9" y="9" width="7" height="7" fill="#232629"/><path d="M3.5,7 V12.5 H9" fill="none" stroke="#232629"/></svg>
<svg style="position:absolute;left:1296px;top:438px;" width="8" height="12" viewBox="0 0 8 12"><polyline points="1.5,1 6.5,6 1.5,11" fill="none" stroke="#232629" stroke-width="1.1"/></svg>
<div class="t" style="left:1309.5px;top:439.49px;font-size:13.6px;line-height:13.6px;color:#232629;font-weight:400;">root</div>
<svg style="position:absolute;left:1345px;top:438px;" width="8" height="12" viewBox="0 0 8 12"><polyline points="1.5,1 6.5,6 1.5,11" fill="none" stroke="#232629" stroke-width="1.1"/></svg>
<div class="t" style="left:1361.5px;top:439.49px;font-size:13.6px;line-height:13.6px;color:#232629;font-weight:400;">home</div>
<svg style="position:absolute;left:1406px;top:438px;" width="8" height="12" viewBox="0 0 8 12"><polyline points="1.5,1 6.5,6 1.5,11" fill="none" stroke="#232629" stroke-width="1.1"/></svg>
<div class="t" style="left:1421.5px;top:439.49px;font-size:13.6px;line-height:13.6px;color:#232629;font-weight:400;">aronkvh</div>
<svg style="position:absolute;left:1481px;top:438px;" width="8" height="12" viewBox="0 0 8 12"><polyline points="1.5,1 6.5,6 1.5,11" fill="none" stroke="#232629" stroke-width="1.1"/></svg>
<div style="position:absolute;left:1495px;top:435px;width:90px;height:22px;overflow:hidden">
<div class="t" style="left:0px;top:4.49px;font-size:13.6px;line-height:13.6px;color:#232629;font-weight:400;-webkit-mask-image:linear-gradient(90deg,#000 75%,transparent 100%);mask-image:linear-gradient(90deg,#000 75%,transparent 100%)">plasma-deskto</div>
</div>
<svg style="position:absolute;left:1593px;top:438px;" width="8" height="12" viewBox="0 0 8 12"><polyline points="1.5,1 6.5,6 1.5,11" fill="none" stroke="#232629" stroke-width="1.1"/></svg>
<div class="t" style="left:1603px;top:439.49px;font-size:13.6px;line-height:13.6px;color:#232629;font-weight:700;">applets</div>
<svg style="position:absolute;left:1687px;top:436px;" width="16" height="16" viewBox="0 0 16 16"><rect x="0.5" y="0.5" width="15" height="15" fill="none" stroke="#232629"/><rect x="0" y="0" width="16" height="3" fill="#232629"/><path d="M5.5,3 V16" stroke="#232629"/><path d="M10.5,7 V13 M7.5,10 H13.5" stroke="#232629"/></svg>
<div class="t" style="left:1710px;top:439.49px;font-size:13.6px;line-height:13.6px;color:#232629;font-weight:400;">Split</div>
<svg style="position:absolute;left:1755px;top:436px;" width="16" height="16" viewBox="0 0 16 16"><circle cx="6.5" cy="6.5" r="5.5" fill="none" stroke="#232629" stroke-width="1.1"/><path d="M10.5,10.5 L15.5,15.5" stroke="#232629" stroke-width="1.1"/></svg>
<svg style="position:absolute;left:1789px;top:437px;" width="16" height="14" viewBox="0 0 16 14"><path d="M0,1 H16 M0,7 H16 M0,13 H16" stroke="#232629" stroke-width="1.7"/></svg>
<div class="t" style="left:1112px;top:476.49px;font-size:13.6px;line-height:13.6px;color:#7f8285;font-weight:400;">Places</div>
<div class="t" style="left:1139px;top:502.49px;font-size:13.6px;line-height:13.6px;color:#232629;font-weight:400;">Home</div>
<svg style="position:absolute;left:1116px;top:500px" width="16" height="16"><path d="M1.5,8 L8,1.5 L14.5,8 M3,6.5 V15 H13 V6.5" fill="none" stroke="#232629" stroke-width="1.1"/><rect x="6.5" y="10.5" width="3" height="4.5" fill="#232629"/><rect x="11" y="1.5" width="1.5" height="3" fill="#232629"/></svg>
<div class="t" style="left:1139px;top:528.49px;font-size:13.6px;line-height:13.6px;color:#232629;font-weight:400;">Desktop</div>
<svg style="position:absolute;left:1116px;top:526px" width="16" height="16"><rect x="0.5" y="0.5" width="15" height="15" fill="none" stroke="#232629"/><path d="M2,13 H14" stroke="#232629"/></svg>
<div class="t" style="left:1139px;top:554.49px;font-size:13.6px;line-height:13.6px;color:#232629;font-weight:400;">Trash</div>
<svg style="position:absolute;left:1116px;top:552px" width="16" height="16"><path d="M2.5,3 H13.5 M5.5,3 V1 H10.5 V3 M3.5,3 V15.5 H12.5 V3 M6.5,6 V12 M9.5,6 V12" fill="none" stroke="#232629"/></svg>
<div class="t" style="left:1139px;top:580.49px;font-size:13.6px;line-height:13.6px;color:#232629;font-weight:400;">5.27</div>
<svg style="position:absolute;left:1116px;top:578px" width="16" height="16"><path d="M0.5,0.5 H6 L8,2.5 H15.5 V15.5 H0.5 Z" fill="none" stroke="#232629"/><path d="M6,2.5 H15.5 V4" fill="#232629" stroke="#232629" stroke-width="2"/></svg>
<div class="t" style="left:1112px;top:609.99px;font-size:13.6px;line-height:13.6px;color:#7f8285;font-weight:400;">Remote</div>
<div style="position:absolute;left:1109px;top:629px;width:152px;height:26px;background:#e2e8ef;border-radius:2px"></div>
<div class="t" style="left:1139px;top:635.99px;font-size:13.6px;line-height:13.6px;color:#232629;font-weight:400;">Network</div>
<svg style="position:absolute;left:1116px;top:633.5px" width="16" height="16"><circle cx="8" cy="8" r="7.3" fill="none" stroke="#232629" stroke-width="1.1"/><circle cx="5" cy="8" r="1.1" fill="#232629"/><circle cx="10" cy="5" r="1.1" fill="#232629"/><circle cx="10" cy="11" r="1.1" fill="#232629"/></svg>
<div class="t" style="left:1112px;top:665.99px;font-size:13.6px;line-height:13.6px;color:#7f8285;font-weight:400;">Recent</div>
<div class="t" style="left:1139px;top:691.99px;font-size:13.6px;line-height:13.6px;color:#232629;font-weight:400;">Recent Files</div>
<svg style="position:absolute;left:1116px;top:689.5px" width="16" height="16"><path d="M7,15.5 H0.5 V0.5 H9 L13,4.5 V7" fill="none" stroke="#232629"/><circle cx="11" cy="12" r="3.5" fill="#eff0f1" stroke="#232629"/><path d="M11,10 V12 H12.5" fill="none" stroke="#232629" stroke-width="0.8"/></svg>
<div class="t" style="left:1139px;top:717.99px;font-size:13.6px;line-height:13.6px;color:#232629;font-weight:400;">Recent Locations</div>
<svg style="position:absolute;left:1116px;top:715.5px" width="16" height="16"><path d="M7,15.5 H0.5 V0.5 H6 L8,2.5 H15.5 V8" fill="none" stroke="#232629"/><rect x="0.5" y="0.5" width="15" height="3" fill="#232629"/><circle cx="12" cy="12" r="3.5" fill="#eff0f1" stroke="#232629"/><path d="M12,10 V12 H13.5" fill="none" stroke="#232629" stroke-width="0.8"/></svg>
<div class="t" style="left:1112px;top:747.99px;font-size:13.6px;line-height:13.6px;color:#7f8285;font-weight:400;">Devices</div>
<div class="t" style="left:1139px;top:771.99px;font-size:13.6px;line-height:13.6px;color:#232629;font-weight:400;">/</div>
<svg style="position:absolute;left:1117px;top:769.5px" width="16" height="17"><rect x="0.5" y="0.5" width="13" height="16" rx="1" fill="none" stroke="#232629"/><path d="M4,11 L9,3" stroke="#232629" stroke-width="1.2"/><rect x="8" y="10" width="8" height="7" fill="#27ae60"/><path d="M10,13.5 H14 M12,11.5 V15.5" stroke="#fff"/></svg>
<div style="position:absolute;left:1139px;top:786px;width:118px;height:3px;background:#c5c6c8;border-radius:1.5px"></div>
<div style="position:absolute;left:1139px;top:786px;width:5px;height:3px;background:#3daee9;border-radius:1.5px"></div>
<div class="t" style="left:1139px;top:797.99px;font-size:13.6px;line-height:13.6px;color:#232629;font-weight:400;">root</div>
<svg style="position:absolute;left:1117px;top:795.5px" width="14" height="17"><rect x="0.5" y="0.5" width="13" height="16" rx="1" fill="none" stroke="#232629"/><path d="M2,2 V12 H12 V2" fill="none" stroke="#232629" stroke-width="0.6"/><rect x="2" y="13" width="3" height="2" fill="#232629"/><rect x="9" y="13" width="3" height="2" fill="#232629"/></svg>
<div style="position:absolute;left:1139px;top:812px;width:118px;height:3px;background:#c5c6c8;border-radius:1.5px"></div>
<div style="position:absolute;left:1139px;top:812px;width:12px;height:3px;background:#3daee9;border-radius:1.5px"></div>
<div class="t" style="left:1139px;top:823.99px;font-size:13.6px;line-height:13.6px;color:#232629;font-weight:400;">HDD3</div>
<svg style="position:absolute;left:1117px;top:821.5px" width="14" height="17"><rect x="0.5" y="0.5" width="13" height="16" rx="1" fill="none" stroke="#232629"/><path d="M2,2 V12 H12 V2" fill="none" stroke="#232629" stroke-width="0.6"/><rect x="2" y="13" width="3" height="2" fill="#232629"/><rect x="9" y="13" width="3" height="2" fill="#232629"/></svg>
<div style="position:absolute;left:1139px;top:838px;width:118px;height:3px;background:#c5c6c8;border-radius:1.5px"></div>
<div style="position:absolute;left:1139px;top:838px;width:53px;height:3px;background:#3daee9;border-radius:1.5px"></div>
<div class="t" style="left:1139px;top:849.99px;font-size:13.6px;line-height:13.6px;color:#232629;font-weight:400;">Basic data partiti...</div>
<svg style="position:absolute;left:1117px;top:847.5px" width="14" height="17"><rect x="0.5" y="0.5" width="13" height="16" rx="1" fill="none" stroke="#232629"/><path d="M2,2 V12 H12 V2" fill="none" stroke="#232629" stroke-width="0.6"/><rect x="2" y="13" width="3" height="2" fill="#232629"/><rect x="9" y="13" width="3" height="2" fill="#232629"/></svg>
<div style="position:absolute;left:1139px;top:864px;width:118px;height:3px;background:#c5c6c8;border-radius:1.5px"></div>
<div style="position:absolute;left:1139px;top:864px;width:81px;height:3px;background:#3daee9;border-radius:1.5px"></div>
<div class="t" style="left:1139px;top:875.99px;font-size:13.6px;line-height:13.6px;color:#232629;font-weight:400;">root</div>
<svg style="position:absolute;left:1117px;top:873.5px" width="14" height="17"><rect x="0.5" y="0.5" width="13" height="16" rx="1" fill="none" stroke="#232629"/><path d="M2,2 V12 H12 V2" fill="none" stroke="#232629" stroke-width="0.6"/><rect x="2" y="13" width="3" height="2" fill="#232629"/><rect x="9" y="13" width="3" height="2" fill="#232629"/></svg>
<div style="position:absolute;left:1139px;top:890px;width:118px;height:3px;background:#c5c6c8;border-radius:1.5px"></div>
<div style="position:absolute;left:1139px;top:890px;width:108px;height:3px;background:#3daee9;border-radius:1.5px"></div>
<div class="t" style="left:1112px;top:907.99px;font-size:13.6px;line-height:13.6px;color:#7f8285;font-weight:400;">Removable Devices</div>
<div class="t" style="left:1139px;top:933.99px;font-size:13.6px;line-height:13.6px;color:#232629;font-weight:400;">neon testing 2...</div>
<svg style="position:absolute;left:1119px;top:931.5px" width="10" height="16"><rect x="1" y="0.5" width="8" height="7" fill="none" stroke="#232629"/><rect x="3" y="2" width="1.5" height="3" fill="#232629"/><rect x="5.5" y="2" width="1.5" height="3" fill="#232629"/><rect x="0.5" y="7.5" width="9" height="8" fill="none" stroke="#232629"/><path d="M3,12 H7" stroke="#232629"/></svg>
<svg style="position:absolute;left:1242px;top:934px" width="12" height="12"><path d="M0,7 L6,0.5 L12,7 Z M0,9.5 H12 V11.5 H0 Z" fill="#232629"/></svg>
<div class="t" style="left:1139px;top:957.99px;font-size:13.6px;line-height:13.6px;color:#232629;font-weight:400;">writable</div>
<svg style="position:absolute;left:1119px;top:955.5px" width="10" height="16"><rect x="1" y="0.5" width="8" height="7" fill="none" stroke="#232629"/><rect x="3" y="2" width="1.5" height="3" fill="#232629"/><rect x="5.5" y="2" width="1.5" height="3" fill="#232629"/><rect x="0.5" y="7.5" width="9" height="8" fill="none" stroke="#232629"/><path d="M3,12 H7" stroke="#232629"/></svg>
<svg style="position:absolute;left:1242px;top:958px" width="12" height="12"><path d="M0,7 L6,0.5 L12,7 Z M0,9.5 H12 V11.5 H0 Z" fill="#232629"/></svg>
<div style="position:absolute;left:1139px;top:972px;width:98px;height:3px;background:#c5c6c8;border-radius:1.5px"></div>
<div style="position:absolute;left:1139px;top:972px;width:5px;height:3px;background:#3daee9;border-radius:1.5px"></div>
<div style="position:absolute;left:1265px;top:467px;width:555px;height:489px;background:#ffffff;border:1px solid #93cbee;border-radius:3px;box-sizing:border-box"></div>
<div style="position:absolute;left:1797px;top:468px;width:1px;height:487px;background:#e8e9ea"></div>
<div style="position:absolute;left:1803px;top:474px;width:9px;height:356px;background:#c4d6e2;border:1px solid #8db3cc;border-radius:4.5px;box-sizing:border-box"></div>
<div style="position:absolute;left:1266px;top:468px;width:531px;height:487px;overflow:hidden">
<svg style="position:absolute;left:54px;top:20px;" width="88" height="78" viewBox="0 0 88 78"><path d="M2,0 H38 L44,6 H86 V30 H2 Z" fill="#2a72a0"/><path d="M0,21 H30 L36,15 H88 V77 H0 Z" fill="#3daee9"/><rect x="0" y="77" width="88" height="1" fill="#2f8fc4"/></svg>
<div class="t" style="left:98px;transform:translateX(-50%);top:112.49px;font-size:13.6px;line-height:13.6px;color:#232629;font-weight:400;">icontasks</div>
<svg style="position:absolute;left:222px;top:20px;" width="88" height="78" viewBox="0 0 88 78"><path d="M2,0 H38 L44,6 H86 V30 H2 Z" fill="#2a72a0"/><path d="M0,21 H30 L36,15 H88 V77 H0 Z" fill="#3daee9"/><rect x="0" y="77" width="88" height="1" fill="#2f8fc4"/></svg>
<div class="t" style="left:266px;transform:translateX(-50%);top:112.49px;font-size:13.6px;line-height:13.6px;color:#232629;font-weight:400;">keyboardlayout</div>
<svg style="position:absolute;left:389px;top:20px;" width="88" height="78" viewBox="0 0 88 78"><path d="M2,0 H38 L44,6 H86 V30 H2 Z" fill="#2a72a0"/><path d="M0,21 H30 L36,15 H88 V77 H0 Z" fill="#3daee9"/><rect x="0" y="77" width="88" height="1" fill="#2f8fc4"/></svg>
<div class="t" style="left:433px;transform:translateX(-50%);top:112.49px;font-size:13.6px;line-height:13.6px;color:#232629;font-weight:400;">kicker</div>
<svg style="position:absolute;left:54px;top:148px;" width="88" height="78" viewBox="0 0 88 78"><path d="M2,0 H38 L44,6 H86 V30 H2 Z" fill="#2a72a0"/><path d="M0,21 H30 L36,15 H88 V77 H0 Z" fill="#3daee9"/><rect x="0" y="77" width="88" height="1" fill="#2f8fc4"/></svg>
<div class="t" style="left:98px;transform:translateX(-50%);top:240.49px;font-size:13.6px;line-height:13.6px;color:#232629;font-weight:400;">kickoff</div>
<svg style="position:absolute;left:222px;top:148px;" width="88" height="78" viewBox="0 0 88 78"><path d="M2,0 H38 L44,6 H86 V30 H2 Z" fill="#2a72a0"/><path d="M0,21 H30 L36,15 H88 V77 H0 Z" fill="#3daee9"/><rect x="0" y="77" width="88" height="1" fill="#2f8fc4"/></svg>
<div class="t" style="left:266px;transform:translateX(-50%);top:240.49px;font-size:13.6px;line-height:13.6px;color:#232629;font-weight:400;">kimpanel</div>
<svg style="position:absolute;left:389px;top:148px;" width="88" height="78" viewBox="0 0 88 78"><path d="M2,0 H38 L44,6 H86 V30 H2 Z" fill="#2a72a0"/><path d="M0,21 H30 L36,15 H88 V77 H0 Z" fill="#3daee9"/><rect x="0" y="77" width="88" height="1" fill="#2f8fc4"/></svg>
<div class="t" style="left:433px;transform:translateX(-50%);top:240.49px;font-size:13.6px;line-height:13.6px;color:#232629;font-weight:400;">margins-separator</div>
<svg style="position:absolute;left:54px;top:276px;" width="88" height="78" viewBox="0 0 88 78"><path d="M2,0 H38 L44,6 H86 V30 H2 Z" fill="#2a72a0"/><path d="M0,21 H30 L36,15 H88 V77 H0 Z" fill="#3daee9"/><rect x="0" y="77" width="88" height="1" fill="#2f8fc4"/></svg>
<div class="t" style="left:98px;transform:translateX(-50%);top:368.49px;font-size:13.6px;line-height:13.6px;color:#232629;font-weight:400;">minimizeall</div>
<svg style="position:absolute;left:222px;top:276px;" width="88" height="78" viewBox="0 0 88 78"><path d="M2,0 H38 L44,6 H86 V30 H2 Z" fill="#2a72a0"/><path d="M0,21 H30 L36,15 H88 V77 H0 Z" fill="#3daee9"/><rect x="0" y="77" width="88" height="1" fill="#2f8fc4"/></svg>
<div class="t" style="left:266px;transform:translateX(-50%);top:368.49px;font-size:13.6px;line-height:13.6px;color:#232629;font-weight:400;">pager</div>
<svg style="position:absolute;left:389px;top:276px;" width="88" height="78" viewBox="0 0 88 78"><path d="M2,0 H38 L44,6 H86 V30 H2 Z" fill="#2a72a0"/><path d="M0,21 H30 L36,15 H88 V77 H0 Z" fill="#3daee9"/><rect x="0" y="77" width="88" height="1" fill="#2f8fc4"/></svg>
<div class="t" style="left:433px;transform:translateX(-50%);top:368.49px;font-size:13.6px;line-height:13.6px;color:#232629;font-weight:400;">showActivityManager</div>
<svg style="position:absolute;left:54px;top:404px;" width="88" height="78" viewBox="0 0 88 78"><path d="M2,0 H38 L44,6 H86 V30 H2 Z" fill="#2a72a0"/><path d="M0,21 H30 L36,15 H88 V77 H0 Z" fill="#3daee9"/><rect x="0" y="77" width="88" height="1" fill="#2f8fc4"/></svg>
<svg style="position:absolute;left:222px;top:404px;" width="88" height="78" viewBox="0 0 88 78"><path d="M2,0 H38 L44,6 H86 V30 H2 Z" fill="#2a72a0"/><path d="M0,21 H30 L36,15 H88 V77 H0 Z" fill="#3daee9"/><rect x="0" y="77" width="88" height="1" fill="#2f8fc4"/></svg>
<svg style="position:absolute;left:389px;top:404px;" width="88" height="78" viewBox="0 0 88 78"><path d="M2,0 H38 L44,6 H86 V30 H2 Z" fill="#2a72a0"/><path d="M0,21 H30 L36,15 H88 V77 H0 Z" fill="#3daee9"/><rect x="0" y="77" width="88" height="1" fill="#2f8fc4"/></svg>
<div style="position:absolute;left:68px;top:128px;width:60px;height:1px;background:#3daee9"></div>
</div>
<div class="t" style="left:1266px;top:965.80px;font-size:13px;line-height:13px;color:#232629;font-weight:400;">13 Folders, 1 File (595 B)</div>
<div class="t" style="left:1461px;top:965.46px;font-size:13.4px;line-height:13.4px;color:#232629;font-weight:400;">Zoom:</div>
<div style="position:absolute;left:1506px;top:969px;width:116px;height:6px;background:#d3d4d5;border:1px solid #c0c1c2;border-radius:3px;box-sizing:border-box"></div>
<div style="position:absolute;left:1506px;top:969px;width:46px;height:6px;background:#7fc8ef;border:1px solid #3daee9;border-radius:3px;box-sizing:border-box"></div>
<div style="position:absolute;left:1542px;top:962px;width:19px;height:19px;background:#fcfcfc;border:1px solid #a0a3a6;border-radius:50%;box-sizing:border-box"></div>
<div style="position:absolute;left:1630px;top:969px;width:104px;height:6px;background:#d3d4d5;border-radius:3px"></div>
<div style="position:absolute;left:1630px;top:969px;width:95px;height:6px;background:#7fc8ef;border:1px solid #3daee9;border-radius:3px;box-sizing:border-box"></div>
<div class="t" style="right:104px;top:965.71px;font-size:13.1px;line-height:13.1px;color:#232629;font-weight:400;">31.4 GiB free</div>
<div style="position:absolute;left:1464px;top:200px;width:336px;height:64px;background:#d4dbde;border-radius:4px;box-shadow:0 1px 8px rgba(0,0,0,0.25)"></div>
<svg style="position:absolute;left:1483px;top:219px;" width="26" height="26" viewBox="0 0 26 26"><g transform="translate(1.3,24.2) rotate(-45)"><rect x="0" y="-0.9" width="3.5" height="1.8" fill="#232629"/><path d="M3.5,-1.9 H21 V1.9 H3.5 Z" fill="none" stroke="#232629" stroke-width="0.9"/><path d="M3,-2.4 H10 L8.5,2.4 H5 Q3,2.4 3,0 Z" fill="#232629"/><rect x="20.5" y="-3.6" width="1.8" height="7.2" fill="#232629"/><path d="M22,-2.4 H28.5 Q31,-2.4 31,0 Q31,2.4 28.5,2.4 H22 Z" fill="#232629"/></g></svg>
<div style="position:absolute;left:1522px;top:220px;width:3px;height:24px;background:#6f7477"></div>
<div style="position:absolute;left:1540px;top:220px;width:24px;height:24px;background:#223d46;border-radius:50%"></div>
<svg style="position:absolute;left:1592.5px;top:220px;" width="24" height="24" viewBox="0 0 24 24"><circle cx="12" cy="12" r="11.5" fill="none" stroke="#232629" stroke-width="1.1"/></svg>
<svg style="position:absolute;left:1644.5px;top:220px;" width="24" height="24" viewBox="0 0 24 24"><circle cx="12" cy="12" r="11.5" fill="none" stroke="#232629" stroke-width="1.1"/></svg>
<svg style="position:absolute;left:1696.5px;top:220px;" width="24" height="24" viewBox="0 0 24 24"><circle cx="12" cy="12" r="11.5" fill="none" stroke="#232629" stroke-width="1.1"/></svg>
<svg style="position:absolute;left:1748px;top:220px;" width="24" height="24" viewBox="0 0 24 24"><circle cx="12" cy="12" r="11.5" fill="none" stroke="#232629" stroke-width="1.1"/></svg>
<div style="position:absolute;left:0px;top:1036px;width:1920px;height:44px;background:#dce4e7"></div>
<div style="position:absolute;left:0px;top:1036px;width:1920px;height:1px;background:#eef3f4"></div>
<svg style="position:absolute;left:9px;top:1045px;" width="26" height="26" viewBox="0 0 26 26"><circle cx="4" cy="4" r="1.6" fill="#232629"/><circle cx="3" cy="11" r="3" fill="#232629"/><circle cx="9" cy="19" r="3" fill="#232629"/><path d="M15,4 L22,11 L15,18" fill="none" stroke="#232629" stroke-width="3.5"/></svg>
<div style="position:absolute;left:45px;top:1036px;width:50px;height:44px;background:#c6ccd0"></div>
<div style="position:absolute;left:45px;top:1036px;width:50px;height:3px;background:#9ea4a8"></div>
<div style="position:absolute;left:97px;top:1036px;width:50px;height:44px;background:#c6ccd0"></div>
<div style="position:absolute;left:97px;top:1036px;width:50px;height:3px;background:#9ea4a8"></div>
<div style="position:absolute;left:149px;top:1036px;width:50px;height:44px;background:#9fcde6"></div>
<div style="position:absolute;left:149px;top:1036px;width:50px;height:3px;background:#3daee9"></div>
<svg style="position:absolute;left:56px;top:1044px;" width="28" height="28" viewBox="0 0 28 28"><defs><linearGradient id="ssg2" x1="0" y1="0" x2="1" y2="1"><stop offset="0" stop-color="#4d5257"/><stop offset="0.5" stop-color="#2a2e32"/><stop offset="1" stop-color="#1f2326"/></linearGradient></defs><rect x="0" y="0" width="28" height="28" rx="1" fill="url(#ssg2)"/><rect x="3" y="9" width="17" height="2.2" fill="#3daee9"/><rect x="20" y="9.5" width="5" height="1.2" fill="#555"/><circle cx="20" cy="10" r="2.2" fill="#fff"/><rect x="3" y="17" width="7" height="2.2" fill="#3daee9"/><rect x="10" y="17.5" width="15" height="1.2" fill="#555"/><circle cx="10" cy="18" r="2.2" fill="#fff"/></svg>
<svg style="position:absolute;left:109px;top:1043px;" width="26" height="30" viewBox="0 0 26 30"><defs><linearGradient id="bag2" x1="0" y1="0" x2="0" y2="1"><stop offset="0" stop-color="#1cb4f7"/><stop offset="1" stop-color="#1a78ea"/></linearGradient></defs><path d="M8.5,10.5 V6 Q8.5,1.2 13,1.2 Q17.5,1.2 17.5,6 V10.5" fill="none" stroke="#3daee9" stroke-width="1.2"/><path d="M2.5,5.5 H23.5 L25.5,9 H0.5 Z" fill="#24506a"/><rect x="0.5" y="9" width="25" height="19.5" fill="url(#bag2)"/><rect x="7.8" y="9.5" width="1.5" height="1.5" fill="#8fd3f7"/><rect x="16.8" y="9.5" width="1.5" height="1.5" fill="#8fd3f7"/><path d="M14,14.5 L17,17.5 L14,20.5" fill="none" stroke="#e8f6ff" stroke-width="1.7"/><circle cx="9" cy="18.5" r="0.9" fill="#cdefff"/><circle cx="12" cy="23" r="1" fill="#cdefff"/><circle cx="11" cy="13" r="0.6" fill="#cdefff"/></svg>
<svg style="position:absolute;left:159px;top:1044px;" width="30" height="28" viewBox="0 0 30 28"><defs><linearGradient id="df2" x1="0" y1="0" x2="1" y2="1"><stop offset="0" stop-color="#5cc0f0"/><stop offset="1" stop-color="#2a86c0"/></linearGradient></defs><path d="M0,0.5 H11 L13,2.5 H30 V28 H0 Z" fill="#1e6a98"/><rect x="1" y="5" width="28" height="4" fill="#fafafa"/><path d="M0,10 H30 V28 H0 Z" fill="url(#df2)"/></svg>
<svg style="position:absolute;left:200px;top:1038px;" width="50" height="40" viewBox="0 0 50 40"><defs><radialGradient id="ffA" cx="0.72" cy="0.18" r="0.95"><stop offset="0" stop-color="#fff44f"/><stop offset="0.3" stop-color="#ffc93a"/><stop offset="0.5" stop-color="#ff9a1f"/><stop offset="0.72" stop-color="#ff4a3d"/><stop offset="0.9" stop-color="#ff2f55"/><stop offset="1" stop-color="#e5005e"/></radialGradient><radialGradient id="ffP" cx="0.45" cy="0.4" r="0.7"><stop offset="0" stop-color="#8f5cff"/><stop offset="0.7" stop-color="#6b4ad8"/><stop offset="1" stop-color="#5a38c0"/></radialGradient></defs><circle cx="26" cy="21.6" r="14.5" fill="url(#ffA)"/><path d="M30.3,4 C35,8.5 40.5,14 40.8,22.5 L35.5,23 C35.5,16 32.5,12 27,10.5 Z" fill="#ffd23a"/><path d="M11.5,18 C11.5,13 13.5,10 16.3,8.8 L17.3,12.2 L20.4,10 L21.5,13.5 Z" fill="#ff8a1c"/><circle cx="26" cy="19.6" r="6.6" fill="url(#ffP)"/><path d="M15.2,17.2 C18.5,15.2 22.5,15.6 25.8,17.6 C22.5,19 21,21.5 21.3,24.5 C19.5,21.5 17.5,19.2 15.2,18.2 Z" fill="#ffad2a"/><path d="M29,13 C30.5,13.5 31.5,14 31.2,15 L29.5,15.2 Z" fill="#ffb22e"/></svg>
<svg style="position:absolute;left:1590px;top:1047px;" width="22" height="22" viewBox="0 0 22 22"><circle cx="6" cy="14" r="4.5" fill="none" stroke="#232629" stroke-width="1.3"/><path d="M3,13 L6,14 L5,17 M7,11 L9,14" stroke="#232629" stroke-width="1"/><circle cx="5" cy="4" r="1" fill="#232629"/><circle cx="3" cy="8" r="1.5" fill="#232629"/><path d="M14,3 L18,7 L14,11" fill="none" stroke="#232629" stroke-width="2.2"/></svg>
<svg style="position:absolute;left:1621px;top:1047px;" width="22" height="22" viewBox="0 0 22 22"><rect x="2" y="4" width="14" height="15" fill="none" stroke="#232629" stroke-width="1.3"/><rect x="4" y="1" width="10" height="4" fill="#232629"/><path d="M5,9 H13 M5,12 H13 M5,15 H10" stroke="#232629" stroke-width="1.2"/></svg>
<svg style="position:absolute;left:1650px;top:1047px;" width="22" height="22" viewBox="0 0 22 22"><path d="M1,8 H5 L10,3 V19 L5,14 H1 Z" fill="#232629"/><path d="M13,6 Q16,11 13,16 M16,3 Q21,11 16,19" fill="none" stroke="#232629" stroke-width="1.3"/></svg>
<svg style="position:absolute;left:1684px;top:1047px;" width="22" height="22" viewBox="0 0 22 22"><path d="M4,7 L12,14 L8,18 V3 L12,7 L4,14" fill="none" stroke="#232629" stroke-width="1.2"/></svg>
<svg style="position:absolute;left:1713px;top:1047px;" width="22" height="22" viewBox="0 0 22 22"><rect x="3" y="1" width="10" height="9" fill="none" stroke="#232629" stroke-width="1.3"/><rect x="5.5" y="3" width="2" height="4" fill="#232629"/><rect x="9" y="3" width="2" height="4" fill="#232629"/><rect x="2" y="10" width="12" height="10" fill="none" stroke="#232629" stroke-width="1.3"/><path d="M5,15 H11" stroke="#232629" stroke-width="1.2"/></svg>
<svg style="position:absolute;left:1741px;top:1047px;" width="22" height="22" viewBox="0 0 22 22"><rect x="4" y="2" width="15" height="13" fill="none" stroke="#232629" stroke-width="1.3"/><rect x="0.5" y="2" width="3" height="6" fill="none" stroke="#232629"/><path d="M2,8 V18 Q2,20 5,20 H9" fill="none" stroke="#232629" stroke-width="1.2"/><path d="M8,17 H16 M10,15 V17 M13,15 V17" stroke="#232629" stroke-width="1.5"/></svg>
<svg style="position:absolute;left:1770px;top:1047px;" width="18" height="22" viewBox="0 0 18 22"><polyline points="2,14 9,8 16,14" fill="none" stroke="#232629" stroke-width="1.2"/></svg>
<div class="t" style="left:1831px;transform:translateX(-50%);top:1045.69px;font-size:15.6px;line-height:15.6px;color:#232629;font-weight:400;">16:40</div>
<div class="t" style="left:1831px;transform:translateX(-50%);top:1062.00px;font-size:13px;line-height:13px;color:#232629;font-weight:400;">3 Feb 2023</div>
<svg style="position:absolute;left:1884px;top:1047px;" width="18" height="22" viewBox="0 0 18 22"><rect x="0.5" y="1.5" width="16" height="15" fill="none" stroke="#232629" stroke-width="1.1"/><path d="M2,14.5 H15" stroke="#232629"/></svg>
</div></body></html>
